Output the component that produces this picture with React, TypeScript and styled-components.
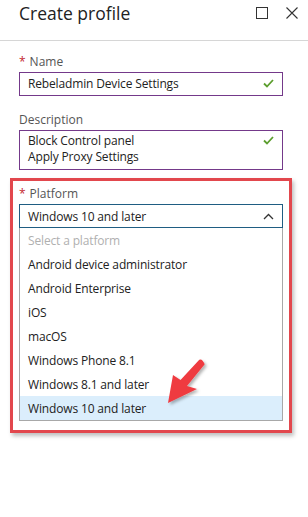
import * as React from 'react';
import styled, { createGlobalStyle } from 'styled-components';

const Global = createGlobalStyle`
  body {
    margin: 0;
    background: #fff;
    font-family: 'Open Sans', 'Noto Sans', sans-serif;
  }
`;

const Panel = styled.div`
  width: 308px;
  height: 517px;
  background: #fff;
  color: #333;
`;

const Header = styled.header`
  height: 41px;
  box-sizing: border-box;
  border-bottom: 1px solid #d6d6d6;
  display: flex;
  align-items: flex-start;
  padding: 0 10px 0 19px;
`;

const Title = styled.h1`
  margin: 0;
  flex: 1;
  font-size: 17.5px;
  font-weight: 400;
  line-height: 26px;
  color: #222;
`;

const HeadButtons = styled.div`
  display: flex;
  gap: 18px;
  padding-top: 7px;
`;

const Body = styled.div`
  padding: 12px 25px 0 19px;
`;

const Label = styled.div`
  font-size: 12px;
  line-height: 17px;
  color: #555;
  margin-bottom: 2px;
`;

const Star = styled.span`
  color: #c4262e;
  margin-right: 4px;
`;

const Field = styled.div<{ $tall?: boolean }>`
  box-sizing: border-box;
  height: ${p => (p.$tall ? '40px' : '24px')};
  border: 1px solid #74398a;
  display: flex;
  align-items: flex-start;
  padding: ${p => (p.$tall ? '2px 8px 0 8px' : '3px 8px 0 8px')};
  font-size: 12px;
  letter-spacing: -0.15px;
  line-height: 16px;
  color: #222;
  margin-bottom: ${p => (p.$tall ? '8px' : '15px')};
`;

const FieldText = styled.div`
  flex: 1;
`;

const Check = styled.svg`
  margin-top: 3px;
`;

const Highlight = styled.div`
  position: relative;
  margin: 0 -9px;
  border: 3px solid #e2474d;
  padding: 4px 6px 9px 6px;
  box-shadow: 2px 3px 4px rgba(0, 0, 0, 0.25);
`;

const Select = styled.div`
  box-sizing: border-box;
  height: 24px;
  border: 1px solid #1f5d82;
  display: flex;
  align-items: center;
  padding: 0 8px;
  font-size: 12px;
  letter-spacing: -0.15px;
  color: #222;
`;

const List = styled.div`
  border: 1px solid #a8a8a8;
  border-top: none;
`;

const Option = styled.div<{ $placeholder?: boolean; $selected?: boolean }>`
  height: 24px;
  display: flex;
  align-items: center;
  padding: 0 8px;
  font-size: 12px;
  letter-spacing: -0.15px;
  color: ${p => (p.$placeholder ? '#b0b0b0' : '#222')};
  background: ${p => (p.$selected ? '#dbeefc' : 'transparent')};
`;

const Arrow = styled.svg`
  position: absolute;
  left: 137px;
  top: 174px;
  pointer-events: none;
`;

const options = [
  'Android device administrator',
  'Android Enterprise',
  'iOS',
  'macOS',
  'Windows Phone 8.1',
  'Windows 8.1 and later',
  'Windows 10 and later',
];

const CheckMark = () => (
  <Check width="11" height="9" viewBox="0 0 11 9">
    <path d="M1 4.5 L4 7.5 L10 1" fill="none" stroke="#5c9e2e" strokeWidth="1.8" />
  </Check>
);

export default function App() {
  return (
    <Panel>
      <Global />
      <Header>
        <Title>Create profile</Title>
        <HeadButtons>
          <svg width="12" height="12" viewBox="0 0 12 12">
            <rect x="0.5" y="0.5" width="11" height="11" fill="none" stroke="#333" strokeWidth="1" />
          </svg>
          <svg width="12" height="12" viewBox="0 0 12 12">
            <path d="M0.5 0.5 L11.5 11.5 M11.5 0.5 L0.5 11.5" stroke="#333" strokeWidth="1.1" />
          </svg>
        </HeadButtons>
      </Header>
      <Body>
        <Label>
          <Star>*</Star>Name
        </Label>
        <Field>
          <FieldText>Rebeladmin Device Settings</FieldText>
          <CheckMark />
        </Field>
        <Label>Description</Label>
        <Field $tall>
          <FieldText>
            Block Control panel
            <br />
            Apply Proxy Settings
          </FieldText>
          <CheckMark />
        </Field>
        <Highlight>
          <Label>
            <Star>*</Star>Platform
          </Label>
          <Select>
            <FieldText>Windows 10 and later</FieldText>
            <svg width="11" height="7" viewBox="0 0 11 7">
              <path d="M1 6 L5.5 1.5 L10 6" fill="none" stroke="#333" strokeWidth="1.3" />
            </svg>
          </Select>
          <List>
            <Option $placeholder>Select a platform</Option>
            {options.map((o, i) => (
              <Option key={o} $selected={i === options.length - 1}>
                {o}
              </Option>
            ))}
          </List>
          <Arrow width="64" height="58" viewBox="0 0 64 58">
            <defs>
              <filter id="sh" x="-20%" y="-20%" width="150%" height="150%">
                <feDropShadow dx="2" dy="2" stdDeviation="1.5" floodColor="#000" floodOpacity="0.3" />
              </filter>
            </defs>
            <path
              d="M18 48 L23 20 L30.5 25 L49.3 4.8 Q52 3 54.7 9.2 L37 31 L47 34 Z"
              fill="#ef3a41"
              filter="url(#sh)"
            />
          </Arrow>
        </Highlight>
      </Body>
    </Panel>
  );
}
